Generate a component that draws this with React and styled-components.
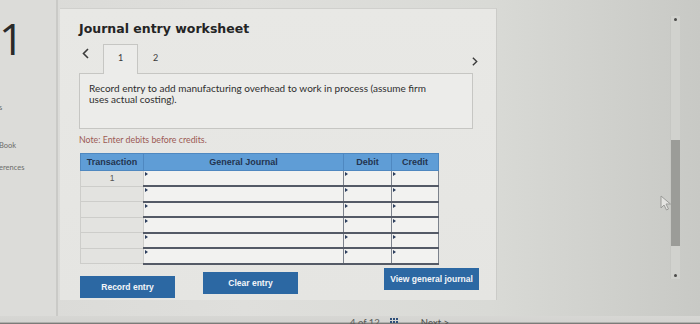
import React from 'react';
import styled, { createGlobalStyle } from 'styled-components';

const GlobalStyle = createGlobalStyle`
  html, body {
    margin: 0;
    padding: 0;
    width: 700px;
    height: 324px;
    overflow: hidden;
  }
  body {
    font-family: "Liberation Sans", Arial, sans-serif;
  }
`;

const ROWS = ['1', '', '', '', '', ''];

function Chevron({ dir }) {
  return (
    <svg width="7" height="11" viewBox="0 0 7 11">
      <path
        d={dir === 'left' ? 'M6 1 L1.5 5.5 L6 10' : 'M1 1 L5.5 5.5 L1 10'}
        fill="none"
        stroke="#3a3a3a"
        strokeWidth="1.6"
      />
    </svg>
  );
}

function App() {
  return (
    <>
      <GlobalStyle />
      <Screen>
        <Top>
          <Sidebar>
            <BigNumber>1</BigNumber>
            <SideLabel top={43}>s</SideLabel>
            <SideLabel top={29}>Book</SideLabel>
            <SideLabel top={13}>erences</SideLabel>
          </Sidebar>

          <Panel>
            <Title>Journal entry worksheet</Title>

            <TabRow>
              <Arrow>
                <Chevron dir="left" />
              </Arrow>
              <Tab active>1</Tab>
              <Tab>2</Tab>
              <Arrow right>
                <Chevron dir="right" />
              </Arrow>
            </TabRow>

            <TaskBox>
              Record entry to add manufacturing overhead to work in process (assume firm
              <br />
              uses actual costing).
            </TaskBox>

            <Note>Note: Enter debits before credits.</Note>

            <Table>
              <colgroup>
                <col style={{ width: 63 }} />
                <col style={{ width: 200 }} />
                <col style={{ width: 48 }} />
                <col style={{ width: 47 }} />
              </colgroup>
              <thead>
                <tr>
                  <Head>Transaction</Head>
                  <Head>General Journal</Head>
                  <Head>Debit</Head>
                  <Head>Credit</Head>
                </tr>
              </thead>
              <tbody>
                {ROWS.map((t, i) => (
                  <Row key={i}>
                    <TransCell>{t}</TransCell>
                    <InputCell />
                    <InputCell />
                    <InputCell />
                  </Row>
                ))}
              </tbody>
            </Table>

            <Buttons>
              <Button shift={5}>Record entry</Button>
              <Button shift={1} gap={28}>Clear entry</Button>
              <Button shift={-3} push>View general journal</Button>
            </Buttons>
          </Panel>

          <Gutter>
            <Scrollbar>
              <ScrollDot />
              <Thumb />
              <ScrollDot />
            </Scrollbar>
          </Gutter>

          <Cursor width="12" height="16" viewBox="0 0 12 16">
            <path d="M1 1 L1 13 L4 10 L6.5 15 L8.5 14 L6 9 L10.5 9 Z" fill="#e4e4e1" stroke="#9a9b98" strokeWidth="1" />
          </Cursor>
        </Top>

        <Footer>
          <Pager>
            <span>4 of 12</span>
            <GridIcon width="9" height="8" viewBox="0 0 9 8">
              {[0, 3, 6].map((x) =>
                [0, 3, 6].map((y) => <rect key={`${x}-${y}`} x={x} y={y} width="2" height="2" fill="#2f4f7a" />)
              )}
            </GridIcon>
            <NextLink>Next &gt;</NextLink>
          </Pager>
        </Footer>
      </Screen>
    </>
  );
}

const Screen = styled.div`
  position: relative;
  width: 700px;
  height: 324px;
  display: flex;
  flex-direction: column;
  overflow: hidden;
  background: linear-gradient(90deg, #dadad7 0%, #dfdfdc 35%, #d9dad6 70%, #c8c9c5 100%);
`;

const Top = styled.div`
  flex: 1;
  display: flex;
  min-height: 0;
`;

const Sidebar = styled.div`
  width: 58px;
  flex-shrink: 0;
  display: flex;
  flex-direction: column;
  border-right: 2px solid #cacac7;
  background: #dcdcd9;
  padding-top: 16px;
  box-sizing: border-box;
  overflow: hidden;
`;

const BigNumber = styled.div`
  font-family: "Open Sans", "Liberation Sans", sans-serif;
  font-size: 44px;
  line-height: 44px;
  color: #2a2a2a;
  margin-left: -1px;
`;

const SideLabel = styled.div`
  margin-top: ${(p) => p.top}px;
  margin-left: -1px;
  font-family: "Lato", "Liberation Sans", sans-serif;
  font-size: 7.5px;
  line-height: 9px;
  color: #6c6c6a;
`;

const Panel = styled.div`
  width: 437px;
  height: 292px;
  flex-shrink: 0;
  margin-top: 8px;
  margin-left: 2px;
  padding: 12px 18px 0 19px;
  box-sizing: border-box;
  display: flex;
  flex-direction: column;
  background: linear-gradient(180deg, #e8e8e5 0%, #e5e5e2 100%);
  border-top: 1px solid #d0d0cd;
  border-right: 1px solid #cbcbc8;
`;

const Title = styled.h1`
  margin: 0;
  font-family: "DejaVu Sans", Verdana, sans-serif;
  font-size: 12.5px;
  line-height: 15px;
  font-weight: bold;
  color: #242424;
`;

const TabRow = styled.div`
  display: flex;
  align-items: stretch;
  height: 29px;
  margin-top: 8px;
  width: 399px;
`;

const Arrow = styled.div`
  display: flex;
  align-items: center;
  margin-left: ${(p) => (p.right ? 'auto' : '3px')};
  margin-top: ${(p) => (p.right ? '6px' : '-10px')};
  width: ${(p) => (p.right ? '6px' : '21px')};
`;

const Tab = styled.div`
  width: 35px;
  box-sizing: border-box;
  display: flex;
  align-items: center;
  justify-content: center;
  padding-bottom: 4px;
  font-family: "Lato", "Liberation Sans", sans-serif;
  font-size: 9px;
  color: #3a3a3a;
  position: relative;
  z-index: 1;
  margin-bottom: -1px;
  background: ${(p) => (p.active ? '#ececea' : 'transparent')};
  border: 1px solid ${(p) => (p.active ? '#c6c6c3' : 'transparent')};
  border-bottom: none;
`;

const TaskBox = styled.div`
  width: 394px;
  height: 56px;
  box-sizing: border-box;
  padding: 9px 9px;
  background: #ececea;
  border: 1px solid #c6c6c3;
  font-family: "Lato", "Liberation Sans", sans-serif;
  font-size: 10px;
  line-height: 11px;
  color: #2e2e2e;
`;

const Note = styled.div`
  margin-top: 6px;
  font-family: "Lato", "Liberation Sans", sans-serif;
  font-size: 8.8px;
  line-height: 10px;
  color: #9c5a55;
`;

const Table = styled.table`
  margin-top: 8px;
  margin-left: 1px;
  width: 358px;
  border-collapse: collapse;
  table-layout: fixed;
`;

const Head = styled.th`
  height: 16px;
  padding: 0;
  background: #5f9dd6;
  border: 1px solid #4f88c0;
  font-family: "Liberation Sans", Arial, sans-serif;
  font-size: 9px;
  font-weight: bold;
  color: #23344f;
  text-align: center;
  vertical-align: middle;
`;

const Row = styled.tr`
  height: 15.5px;
`;

const TransCell = styled.td`
  padding: 0;
  background: #e3e3e0;
  border: 1px solid #cdcdca;
  font-family: "Liberation Sans", Arial, sans-serif;
  font-size: 8.5px;
  color: #555;
  text-align: center;
  vertical-align: middle;
`;

const InputCell = styled.td`
  position: relative;
  padding: 0;
  background: #f2f2f0;
  border: 1px solid #7c828c;
  border-bottom: 2px solid #545a66;

  &::before {
    content: '';
    position: absolute;
    left: 1px;
    top: 1px;
    border-style: solid;
    border-width: 2px 0 2px 3px;
    border-color: transparent transparent transparent #2b3d5c;
  }
`;

const Buttons = styled.div`
  display: flex;
  align-items: flex-start;
  margin-top: 6px;
  padding-left: 1px;
  width: 399px;
`;

const Button = styled.button`
  width: 95px;
  height: 22px;
  margin-top: ${(p) => p.shift}px;
  margin-left: ${(p) => (p.push ? 'auto' : `${p.gap || 0}px`)};
  padding: 0;
  border: none;
  background: #2c68a3;
  color: #f4f6f9;
  font-family: "Liberation Sans", Arial, sans-serif;
  font-size: 8.5px;
  font-weight: bold;
  cursor: pointer;
`;

const Gutter = styled.div`
  flex: 1;
  display: flex;
  justify-content: flex-end;
  padding: 16px 20px 40px 0;
`;

const Scrollbar = styled.div`
  width: 9px;
  height: 263px;
  display: flex;
  flex-direction: column;
  align-items: center;
  background: #d1d2ce;
  border-left: 1px solid #c6c7c3;
`;

const ScrollDot = styled.div`
  width: 3px;
  height: 3px;
  margin: 2px 0;
  background: #4a4a48;
  border-radius: 50%;
  &:first-child {
    margin-bottom: 119px;
  }
`;

const Thumb = styled.div`
  width: 9px;
  height: 106px;
  margin-bottom: 26px;
  background: #9b9c98;
`;

const Cursor = styled.svg`
  position: absolute;
  left: 660px;
  top: 195px;
`;

const Footer = styled.div`
  height: 8px;
  flex-shrink: 0;
  overflow: hidden;
  background: linear-gradient(180deg, #d7d7d4 0px, #d4d4d1 6px, #8a8b88 7px, #6b6c69 8px);
`;

const Pager = styled.div`
  display: flex;
  align-items: flex-start;
  gap: 10px;
  padding-left: 350px;
  margin-top: 1px;
  font-family: "Lato", "Liberation Sans", sans-serif;
  font-size: 9.5px;
  line-height: 11px;
  color: #5a5a58;
`;

const GridIcon = styled.svg`
  margin-top: 1px;
`;

const NextLink = styled.span`
  margin-left: 12px;
  color: #4a4a48;
`;

export default App;
